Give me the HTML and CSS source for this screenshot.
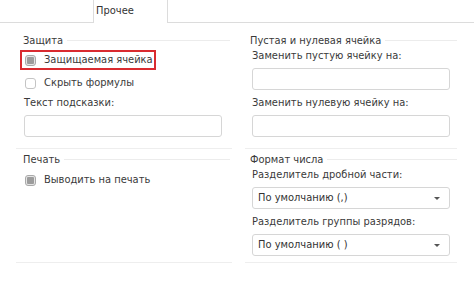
FILE: index.html
```html
<!DOCTYPE html>
<html lang="ru">
<head>
<meta charset="utf-8">
<link rel="stylesheet" href="styles.css">
</head>
<body>
<div class="page">
  <div class="tabs">
    <div class="tab-gap tab-gap-left"></div>
    <div class="tab active">Прочее</div>
    <div class="tab-gap tab-gap-right"></div>
  </div>
  <div class="panel">
    <div class="col col-left">
      <div class="section s1">
        <div class="legend"><span class="legend-text">Защита</span><span class="legend-line"></span></div>
        <div class="cbrow highlighted"><span class="cb checked"></span><span class="cb-label">Защищаемая ячейка</span></div>
        <div class="cbrow plain"><span class="cb"></span><span class="cb-label">Скрыть формулы</span></div>
        <div class="label l-first-left">Текст подсказки:</div>
        <div class="input"></div>
      </div>
      <div class="section s2">
        <div class="legend"><span class="legend-text">Печать</span><span class="legend-line"></span></div>
        <div class="cbrow plain first"><span class="cb checked"></span><span class="cb-label">Выводить на печать</span></div>
      </div>
    </div>
    <div class="col col-right">
      <div class="section s1">
        <div class="legend"><span class="legend-text">Пустая и нулевая ячейка</span><span class="legend-line"></span></div>
        <div class="label l-first">Заменить пустую ячейку на:</div>
        <div class="input"></div>
        <div class="label">Заменить нулевую ячейку на:</div>
        <div class="input"></div>
      </div>
      <div class="section s2">
        <div class="legend"><span class="legend-text">Формат числа</span><span class="legend-line"></span></div>
        <div class="label l-first">Разделитель дробной части:</div>
        <div class="input select"><span class="sel-text">По умолчанию (,)</span><span class="caret"></span></div>
        <div class="label">Разделитель группы разрядов:</div>
        <div class="input select"><span class="sel-text">По умолчанию ( )</span><span class="caret"></span></div>
      </div>
    </div>
  </div>
</div>
</body>
</html>
```

FILE: styles.css
```css
html, body {
  margin: 0;
  padding: 0;
  background: #ffffff;
}
.page {
  width: 474px;
  height: 282px;
  overflow: hidden;
  font-family: "DejaVu Sans Condensed", "DejaVu Sans", sans-serif;
  font-stretch: semi-condensed;
  font-size: 11px;
  color: #3a3a3a;
  background: #ffffff;
  white-space: nowrap;
}
.tabs {
  display: flex;
  height: 23px;
}
.tab-gap {
  border-bottom: 1px solid #dcdcdc;
  box-sizing: border-box;
}
.tab-gap-left { width: 93px; }
.tab-gap-right { flex: 1; }
.tab {
  box-sizing: border-box;
  width: 75px;
  height: 23px;
  border-left: 1px solid #dcdcdc;
  border-right: 1px solid #dcdcdc;
  padding-left: 2px;
  line-height: 22px;
  color: #333;
}
.panel {
  display: flex;
  padding-top: 11px;
}
.col-left {
  margin-left: 16px;
  width: 216px;
}
.col-right {
  margin-left: 13px;
  width: 212px;
}
.section {
  box-sizing: border-box;
  border-bottom: 1px solid #eeeeee;
}
.section.s1 { height: 115px; }
.section.s2 { height: 114px; padding-top: 4px; }
.legend {
  display: flex;
  align-items: center;
  height: 14px;
  line-height: 14px;
}
.col-left .legend { padding-left: 7px; padding-right: 2px; }
.col-right .legend { padding-left: 5px; }
.legend-line {
  flex: 1;
  height: 1px;
  background: #ececec;
  margin-left: 4px;
  margin-top: -2px;
}
.cbrow {
  display: flex;
  align-items: center;
  box-sizing: border-box;
}
.cbrow.highlighted {
  margin-top: 2px;
  margin-left: 4px;
  width: 136px;
  height: 20px;
  border: 2px solid #d92b30;
  padding-left: 3px;
}
.cbrow.plain {
  margin-top: 4px;
  margin-left: 9px;
  height: 18px;
}
.cb {
  box-sizing: border-box;
  width: 11px;
  height: 11px;
  border: 1px solid #c4c4c4;
  border-radius: 3px;
  background: #ffffff;
  display: flex;
  align-items: center;
  justify-content: center;
  flex: none;
}
.cb.checked {
  background: #e4e4e4;
  border-color: #a9a9a9;
}
.cb.checked::after {
  content: "";
  width: 7px;
  height: 7px;
  border-radius: 1px;
  background: #9c9c9c;
}
.cb-label {
  margin-left: 8px;
  line-height: 14px;
}
.highlighted .cb-label { margin-left: 8px; }
.label {
  height: 14px;
  line-height: 14px;
  margin-top: 6px;
  padding-left: 7px;
}
.label.l-first-left { margin-top: 4px; padding-left: 8px; }
.label.l-first { margin-top: 1px; }
.input {
  box-sizing: border-box;
  margin-top: 5px;
  height: 22px;
  border: 1px solid #d6d6d6;
  border-radius: 3px;
  background: #ffffff;
}
.col-left .input { margin-left: 8px; width: 198px; }
.col-right .input { margin-left: 7px; width: 198px; }
.select {
  display: flex;
  align-items: center;
  justify-content: space-between;
  padding-left: 5px;
  padding-right: 9px;
}
.sel-text { line-height: 14px; color: #333; }
.caret {
  width: 0;
  height: 0;
  border-left: 3px solid transparent;
  border-right: 3px solid transparent;
  border-top: 3px solid #555;
}
```
